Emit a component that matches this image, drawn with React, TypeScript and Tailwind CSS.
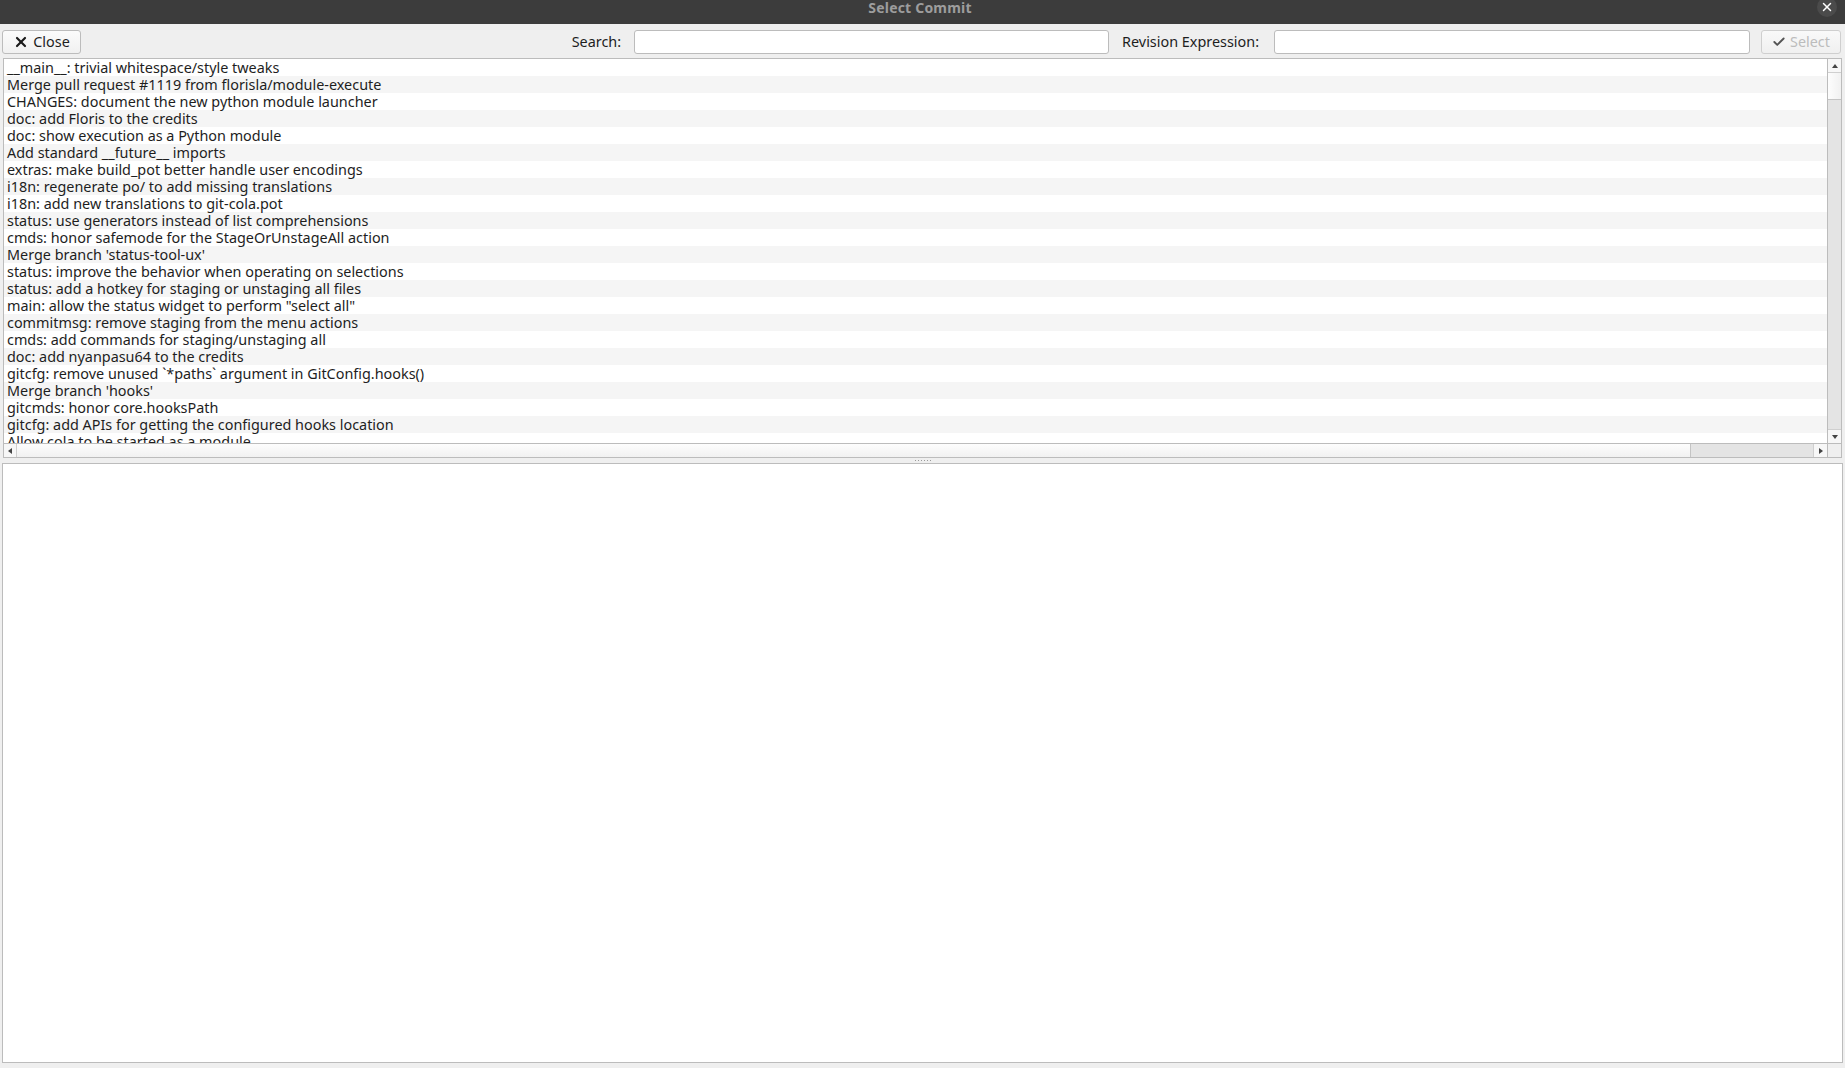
import { X, Check } from "lucide-react";

const commits = [
  "__main__: trivial whitespace/style tweaks",
  "Merge pull request #1119 from florisla/module-execute",
  "CHANGES: document the new python module launcher",
  "doc: add Floris to the credits",
  "doc: show execution as a Python module",
  "Add standard __future__ imports",
  "extras: make build_pot better handle user encodings",
  "i18n: regenerate po/ to add missing translations",
  "i18n: add new translations to git-cola.pot",
  "status: use generators instead of list comprehensions",
  "cmds: honor safemode for the StageOrUnstageAll action",
  "Merge branch 'status-tool-ux'",
  "status: improve the behavior when operating on selections",
  "status: add a hotkey for staging or unstaging all files",
  'main: allow the status widget to perform "select all"',
  "commitmsg: remove staging from the menu actions",
  "cmds: add commands for staging/unstaging all",
  "doc: add nyanpasu64 to the credits",
  "gitcfg: remove unused `*paths` argument in GitConfig.hooks()",
  "Merge branch 'hooks'",
  "gitcmds: honor core.hooksPath",
  "gitcfg: add APIs for getting the configured hooks location",
  "Allow cola to be started as a module",
  "Merge branch 'master' into module-execute",
];

const Arrow = ({ dir }: { dir: "up" | "down" | "left" | "right" }) => {
  const pts = {
    up: "1,6 4,2 7,6",
    down: "1,2 4,6 7,2",
    left: "6,1 2,4 6,7",
    right: "2,1 6,4 2,7",
  }[dir];
  return (
    <svg width="8" height="8" viewBox="0 0 8 8">
      <polygon points={pts} fill="#444" />
    </svg>
  );
};

const App = () => {
  return (
    <div
      className="w-[1845px] h-[1068px] flex flex-col bg-[#efefef] overflow-hidden text-[#1e1e1e]"
      style={{ fontFamily: '"Noto Sans", "Open Sans", sans-serif' }}
    >
      {/* title bar */}
      <div className="h-[24px] bg-[#3c3c3c] flex items-start">
        <div className="flex-1" />
        <div className="text-[14px] font-bold leading-[14px] text-[#9d9d9d] pt-[1px] pl-[3px] tracking-[0.2px]">
          Select Commit
        </div>
        <div className="flex-1 flex justify-end pr-[8px]">
          <div className="w-[20px] h-[20px] -mt-[3px] rounded-full bg-[#4b4b4b] flex items-center justify-center">
            <X className="w-[14px] h-[14px] text-white" strokeWidth={2.5} />
          </div>
        </div>
      </div>

      {/* toolbar */}
      <div className="h-[34px] pt-[1px] flex items-center pl-[2px] pr-[4px] text-[14.4px]">
        <button className="w-[79px] h-[24px] flex items-center justify-center gap-[4px] border border-[#bcbcbc] rounded-[3px] bg-gradient-to-b from-[#fbfbfb] to-[#f0f0f0]">
          <X className="w-[16px] h-[16px] text-[#1a1a1a]" strokeWidth={3.2} />
          <span>Close</span>
        </button>
        <div className="flex-1" />
        <span className="mr-[13px]">Search:</span>
        <div className="w-[475px] h-[24px] bg-white border border-[#bcbcbc] rounded-[3px]" />
        <span className="ml-[13px] mr-[15px]">Revision Expression:</span>
        <div className="w-[476px] h-[24px] bg-white border border-[#bcbcbc] rounded-[3px]" />
        <button className="ml-[11px] w-[80px] h-[24px] flex items-center justify-center gap-[4px] border border-[#cfcfcf] rounded-[3px] bg-gradient-to-b from-[#f9f9f9] to-[#f0f0f0] text-[#bcbcbc]">
          <Check className="w-[14px] h-[14px] text-[#555]" strokeWidth={3.2} />
          <span>Select</span>
        </button>
      </div>

      {/* commit list */}
      <div className="mx-[3px] h-[400px] border border-[#bcbcbc] bg-white grid grid-cols-[1fr_14px] grid-rows-[1fr_14px]">
        <div className="overflow-hidden text-[14.4px] leading-[17px]">
          {commits.map((c, i) => (
            <div
              key={i}
              className={`h-[17px] pl-[3px] whitespace-pre ${i % 2 ? "bg-[#f5f5f5]" : "bg-white"}`}
            >
              {c}
            </div>
          ))}
        </div>
        <div className="border-l border-[#bcbcbc] bg-[#e4e4e4] flex flex-col">
          <div className="h-[14px] bg-[#f7f7f7] border-b border-[#cfcfcf] flex items-center justify-center">
            <Arrow dir="up" />
          </div>
          <div className="h-[27px] bg-gradient-to-r from-[#fdfdfd] to-[#f1f1f1] border-b border-[#c4c4c4]" />
          <div className="flex-1" />
          <div className="h-[14px] bg-[#f7f7f7] border-t border-[#cfcfcf] flex items-center justify-center">
            <Arrow dir="down" />
          </div>
        </div>
        <div className="border-t border-[#bcbcbc] bg-[#e4e4e4] flex">
          <div className="w-[13px] bg-[#f7f7f7] border-r border-[#cfcfcf] flex items-center justify-center">
            <Arrow dir="left" />
          </div>
          <div className="w-[1674px] bg-gradient-to-b from-[#fdfdfd] to-[#f1f1f1] border-r border-[#c4c4c4]" />
          <div className="flex-1" />
          <div className="w-[14px] bg-[#f7f7f7] border-l border-[#cfcfcf] flex items-center justify-center">
            <Arrow dir="right" />
          </div>
        </div>
        <div className="border-t border-l border-[#bcbcbc] bg-[#efefef]" />
      </div>

      {/* splitter */}
      <div className="h-[5px] flex items-center justify-center gap-[2px]">
        {[0, 1, 2, 3, 4, 5].map((d) => (
          <div key={d} className="w-[1px] h-[1px] bg-[#9a9a9a]" />
        ))}
      </div>

      {/* lower panel */}
      <div className="mx-[2px] mb-[5px] flex-1 bg-white border border-[#bcbcbc]" />
    </div>
  );
};

export default App;
